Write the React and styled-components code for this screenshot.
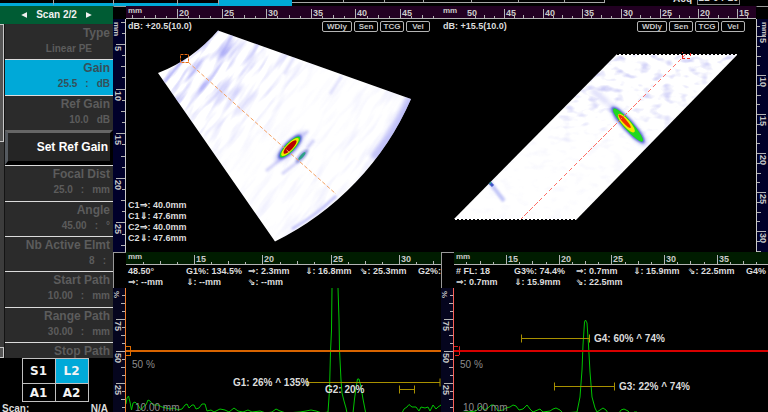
import React from 'react'
import styled, { createGlobalStyle, css } from 'styled-components'

const GlobalStyle = createGlobalStyle`
	* {
		box-sizing: border-box;
	}
	body {
		margin: 0;
		background: #000;
		color: #dcdcdc;
		font-family: 'Liberation Sans', Arial, sans-serif;
		font-weight: bold;
		overflow: hidden;
	}
	button {
		font: inherit;
		color: inherit;
		background: none;
		border: 0;
		padding: 0;
		margin: 0;
	}
`

const Screen = styled.div`
	height: 100vh;
	display: flex;
	flex-direction: column;
`

/* ---------- top menu ---------- */

const TopBar = styled.header`
	flex: 0 0 6px;
	display: flex;
	overflow: hidden;
`

const MenuCell = styled.div`
	flex: 0 0 ${p => p.$w}px;
	height: 6px;
	background: ${p => (p.$active ? '#00a9d8' : '#000')};
	border-right: ${p => (p.$active ? 0 : '1px solid #a8a8a8')};
	border-bottom: ${p => (p.$under ? '3px solid #00a9d8' : 0)};
`

const MenuRest = styled.div`
	display: flex;
	height: 3px;
	overflow: hidden;
	border-bottom: 1px solid #a8a8a8;
`

const MenuStatus = styled.div`
	margin-left: auto;
	display: flex;
	align-items: flex-end;
	height: 5px;
	padding-right: 28px;
	gap: 5px;
	font-size: 10px;
	line-height: 12px;
`

const DateBox = styled.span`
	width: 43px;
	height: 14px;
	border: 1px solid #888;
	text-align: center;
`

const Body = styled.div`
	flex: 1;
	min-height: 0;
	display: flex;
`

/* ---------- side panel ---------- */

const Side = styled.aside`
	flex: 0 0 113px;
	display: flex;
	flex-direction: column;
	overflow: hidden;
`

const ScanHeader = styled.div`
	flex: 0 0 18px;
	display: flex;
	align-items: center;
	justify-content: center;
	gap: 9px;
	background: #005c34;
	color: #f0f0f0;
	font-size: 10px;
	line-height: 18px;
`

const Arrow = styled.button`
	width: 6px;
	height: 6px;
	background: #f0f0f0;
	clip-path: ${p =>
		p.$left ? 'polygon(100% 0, 100% 100%, 0 50%)' : 'polygon(0 0, 100% 50%, 0 100%)'};
`

const ListWrap = styled.div`
	flex: 1;
	min-height: 0;
	display: flex;
`

const Track = styled.div`
	flex: 0 0 5px;
	display: flex;
	flex-direction: column;
	justify-content: space-between;
	background: #3c3c3c;
	border-right: 1px solid #141414;
`

const Thumb = styled.div`
	height: ${p => p.$h}px;
	background: #555;
	border: 1px solid #c8c8c8;
	border-left: 0;
`

const Params = styled.div`
	flex: 1;
	min-width: 0;
	display: grid;
	grid-template-rows: repeat(9, minmax(0, 1fr)) 16px;
`

const ParamRow = styled.button`
	min-height: 0;
	overflow: hidden;
	display: flex;
	flex-direction: column;
	align-items: flex-end;
	padding-right: 3px;
	border-top: 1px solid ${p => (p.$first ? '#2a2a2a' : '#dcdcdc')};
	background: ${p => (p.$active ? '#00a9d8' : '#2b2b2b')};
	color: ${p => (p.$active ? '#35505a' : '#5c5c5c')};
`

const ParamName = styled.span`
	font-size: 12px;
	line-height: 16px;
`

const ParamValue = styled.span`
	display: flex;
	gap: 8px;
	font-size: 10px;
	line-height: 16px;
	padding-right: ${p => p.$pad || 0}px;
`

const ActionRow = styled.button`
	min-height: 0;
	border-top: 3px solid #666;
	border-left: 3px solid #555a60;
	border-right: 3px solid #000;
	border-bottom: 4px solid #000;
	background: #252525;
	color: #fff;
	text-align: right;
	font-size: 12px;
	line-height: 16px;
	padding-right: 2px;
`

const ViewGrid = styled.div`
	flex: none;
	align-self: center;
	margin-right: 3px;
	display: grid;
	grid-template-columns: 32px 32px;
	grid-template-rows: 24px 17px;
	gap: 1px;
	padding: 1px;
	background: #c0c0c0;
`

const ViewButton = styled.button`
	background: ${p => (p.$on ? '#00a9d8' : '#000')};
	color: #f4f4f4;
	font-family: 'DejaVu Sans', sans-serif;
	font-size: 12px;
	line-height: 16px;
`

const ScanStatus = styled.div`
	flex: none;
	height: 10px;
	overflow: hidden;
	display: flex;
	justify-content: space-between;
	padding: 0 5px 0 2px;
	font-size: 10px;
	line-height: 14px;
`

/* ---------- scan views ---------- */

const Main = styled.main`
	flex: 1;
	min-width: 0;
	display: grid;
	grid-template-columns: 328fr 327fr;
	grid-template-rows: 246fr 160fr;
`

const ScanView = styled.section`
	min-width: 0;
	min-height: 0;
	display: grid;
	grid-template-columns: ${p => (p.$flip ? 'minmax(0, 1fr) 12px' : '13px minmax(0, 1fr)')};
	grid-template-rows: 13px minmax(0, 1fr);
`

const WaveView = styled.section`
	min-width: 0;
	min-height: 0;
	display: grid;
	grid-template-columns: 13px minmax(0, 1fr);
	grid-template-rows: 13px 23px minmax(0, 1fr);
`

const Corner = styled.div`
	border-top: 1px solid #999;
	border-left: 1px solid ${p => (p.$tall ? '#999' : '#000')};
	grid-row: ${p => (p.$tall ? 'span 2' : 'auto')};
`

const tones = {
	purple: '#220022',
	navy: '#00002a',
	green: '#001c00',
	slate: '#05051e'
}

const RulerSvg = styled.svg`
	display: block;
	width: 100%;
	height: 100%;
	overflow: hidden;
	background: ${p => tones[p.$tone]};
	shape-rendering: crispEdges;
	text {
		fill: #c8c8c8;
		font-size: 9px;
	}
	text.unit {
		font-size: 8px;
	}
	line {
		stroke: #b4b4b4;
	}
`

const Canvas = styled.div`
	position: relative;
	min-width: 0;
	min-height: 0;
	overflow: hidden;
	display: grid;
	grid-template: minmax(0, 1fr) / minmax(0, 1fr);
	> * {
		grid-area: 1 / 1;
	}
`

const Plot = styled.svg`
	display: block;
	width: 100%;
	height: 100%;
`

const Overlay = styled.div`
	z-index: 1;
	display: flex;
	flex-direction: column;
	justify-content: space-between;
	padding: 2px 11px 8px 2px;
	font-size: 9px;
	line-height: 11px;
`

const OverlayTop = styled.div`
	display: flex;
	justify-content: space-between;
`

const Chips = styled.div`
	display: flex;
	gap: 2px;
`

const Chip = styled.button`
	width: ${p => (p.$wide ? 30 : 24)}px;
	height: 11px;
	border: 1px solid #b4b4b4;
	border-radius: 2px;
	font-size: 8px;
	line-height: 9px;
	color: #c8c8c8;
`

const Cursors = styled.div`
	white-space: pre;
	line-height: 11px;
`

const arrowFont = css`
	font-family: 'Liberation Sans', 'DejaVu Sans', sans-serif;
`

const Readout = styled.div`
	${arrowFont}
	display: grid;
	grid-template-columns: 58px 62px 57px 55px 58px 58px;
	grid-auto-rows: 11px;
	padding: 1px 0 0 2px;
	overflow: hidden;
	white-space: nowrap;
	font-size: 9px;
	line-height: 11px;
`

const range = (from, to) => Array.from({ length: to - from }, (_, i) => from + i)

// start: position of the first labelled tick, step: pixels between labelled ticks
const HRuler = ({ tone, start, step, labels, unitX = 2, firstLine = true }) => (
	<RulerSvg $tone={tone}>
		{range(-4, labels.length * 4 + 1).map(i => {
			const x = Math.round(start + (i * step) / 4)
			const major = i % 4 === 0 && i >= 0 && i / 4 < labels.length
			if (x < 1 || (i <= 0 && !firstLine)) return null
			return (
				<line
					key={i}
					x1={x + 0.5}
					x2={x + 0.5}
					y1={major ? 3 : i % 2 ? 10 : 9}
					y2='12'
				/>
			)
		})}
		<line x1='0' x2='100%' y1='12.5' y2='12.5' />
		<text className='unit' x={unitX} y='7'>mm</text>
		{labels.map((l, i) => (
			<text key={l} x={Math.round(start + i * step) + 2} y='10'>{l}</text>
		))}
	</RulerSvg>
)

const VRuler = ({ tone, start, step, labels, unit = 'mm', flip, line = '#c8c8c8' }) => (
	<RulerSvg $tone={tone}>
		{range(-4, labels.length * 4 + 1).map(i => {
			const y = Math.round(start + (i * step) / 4)
			const major = i % 4 === 0 && i >= 0 && i / 4 < labels.length
			const len = major ? 9 : i % 2 ? 3 : 4
			if (y < 1) return null
			return (
				<line
					key={i}
					x1={flip ? 1 : 12 - len}
					x2={flip ? 1 + len : 12}
					y1={y + 0.5}
					y2={y + 0.5}
				/>
			)
		})}
		<line
			x1={flip ? 0.5 : 12.5}
			x2={flip ? 0.5 : 12.5}
			y1='0'
			y2='100%'
			style={{ stroke: line }}
		/>
		<text className='unit' transform={`translate(${flip ? 6 : 1} 3) rotate(90)`}>{unit}</text>
		{labels.map((l, i) => (
			<text
				key={l}
				transform={`translate(${flip ? 4 : 2} ${Math.round(start + i * step) + 2}) rotate(90)`}
			>
				{l}
			</text>
		))}
	</RulerSvg>
)

const Echo = ({ x, y, angle, rx, ry, hot, core = '#b80000' }) => (
	<g transform={`translate(${x} ${y}) rotate(${angle})`}>
		<ellipse rx={rx + 5} ry={ry} fill='#8888f0' opacity='0.5' filter='url(#soft2)' />
		<ellipse rx={rx + 1} ry={ry} fill='#4858d0' filter='url(#soft1)' />
		<ellipse rx={rx - 1} ry={ry - 1} fill='#20d820' />
		<ellipse cx={hot.dx / 2} rx={hot.rx + 3} ry={ry - 1.8} fill='#f4e800' />
		<ellipse cx={hot.dx} rx={hot.rx} ry={hot.ry} fill={core} />
	</g>
)

const Defs = () => (
	<defs>
		<filter id='soft1' x='-50%' y='-50%' width='200%' height='200%'>
			<feGaussianBlur stdDeviation='0.8' />
		</filter>
		<filter id='soft2' x='-50%' y='-100%' width='200%' height='300%'>
			<feGaussianBlur stdDeviation='2' />
		</filter>
		<filter id='streaks' x='0' y='0' width='100%' height='100%' colorInterpolationFilters='sRGB'>
			<feTurbulence type='fractalNoise' baseFrequency='0.03 0.15' numOctaves='2' seed='7' />
			<feColorMatrix values='0 0 0 0 0.55  0 0 0 0 0.55  0 0 0 0 0.96  2.8 0 0 0 -1.3' />
		</filter>
		<filter id='speckle' x='0' y='0' width='100%' height='100%' colorInterpolationFilters='sRGB'>
			<feTurbulence type='fractalNoise' baseFrequency='0.08 0.14' numOctaves='2' seed='4' />
			<feColorMatrix values='0 0 0 0 0.65  0 0 0 0 0.65  0 0 0 0 0.94  2.4 0 0 0 -1.25' />
		</filter>
	</defs>
)

const SECTOR = 'M158 73A150 150 0 0 0 218 30.5L411 99A286 286 0 0 1 275 241.5Z'

const SectorScan = () => (
	<Plot viewBox='126 19 315 233' preserveAspectRatio='xMinYMin meet'>
		<Defs />
		<defs>
			<clipPath id='sector'><path d={SECTOR} /></clipPath>
			<radialGradient id='nearField' gradientUnits='userSpaceOnUse' cx='102' cy='-70' r='340'>
				<stop offset='0.44' stopColor='#eee' />
				<stop offset='0.52' stopColor='#aaa' />
				<stop offset='0.66' stopColor='#555' />
				<stop offset='0.78' stopColor='#101010' />
				<stop offset='1' stopColor='#222' />
			</radialGradient>
			<mask id='nearMask'>
				<rect x='126' y='19' width='315' height='233' fill='url(#nearField)' />
			</mask>
		</defs>
		<path d={SECTOR} fill='#fff' />
		<g clipPath='url(#sector)'>
			<g mask='url(#nearMask)'>
				<rect x='-200' y='-200' width='500' height='450' transform='translate(250 130) rotate(-54)' filter='url(#streaks)' />
			</g>
			<path d='M413 98Q398 132 375 160' stroke='#7878f0' strokeWidth='14' fill='none' opacity='0.45' filter='url(#soft2)' />
			<path d='M336 196Q315 216 292 229' stroke='#9090f4' strokeWidth='3' fill='none' opacity='0.5' filter='url(#soft1)' />
			<path d='M231 38L222 56M296 54L284 74M342 76L330 94' stroke='#8888f0' strokeWidth='3' opacity='0.25' filter='url(#soft1)' />
			<path d='M282 158L266 171M299 161L282 174M303 135L308 131M307 148L314 140' stroke='#8888ee' strokeWidth='3' opacity='0.35' filter='url(#soft1)' />
		</g>
		<Echo x={290} y={147} angle={-46} rx={15} ry={5.5} hot={{ dx: 0, rx: 9, ry: 2.8 }} />
		<g transform='translate(302 156) rotate(-48)'>
			<ellipse rx='9' ry='3' fill='#6870d0' opacity='0.7' filter='url(#soft1)' />
			<ellipse rx='5' ry='1.5' fill='#30a088' />
		</g>
		<path d='M188 62L336 194' stroke='#f4a060' strokeDasharray='4 2' fill='none' />
		<rect x='180.5' y='54.5' width='8' height='8' fill='none' stroke='#e86a10' strokeDasharray='3 1' />
	</Plot>
)

const LinearScan = () => (
	<Plot viewBox='441 19 315 233' preserveAspectRatio='xMinYMin meet'>
		<defs>
			<clipPath id='linear'><path d='M617 54H738L576 220H453Z' /></clipPath>
			<linearGradient id='fade' x1='0' y1='0' x2='0' y2='1'>
				<stop offset='0' stopColor='#ccc' />
				<stop offset='0.35' stopColor='#999' />
				<stop offset='0.55' stopColor='#222' />
				<stop offset='1' stopColor='#111' />
			</linearGradient>
			<mask id='linearMask'>
				<rect x='441' y='54' width='315' height='166' fill='url(#fade)' />
			</mask>
		</defs>
		<path d='M617 54H738L576 220H453Z' fill='#fff' />
		<g clipPath='url(#linear)'>
			<g mask='url(#linearMask)'>
				<rect x='441' y='50' width='315' height='172' filter='url(#speckle)' />
			</g>
			<path d='M608 103L592 90' stroke='#8888ee' strokeWidth='5' opacity='0.3' filter='url(#soft2)' />
			<Echo x={628} y={125} angle={48} rx={23} ry={5.5} core='#f03000' hot={{ dx: -5, rx: 9, ry: 2 }} />
			<path d='M488 180L504 201' stroke='#8890f0' strokeWidth='4' opacity='0.5' filter='url(#soft1)' />
			<path d='M488 181L493 186' stroke='#4058c8' strokeWidth='3' />
			<path d='M488 182L491 183' stroke='#30b080' strokeWidth='2' />
		</g>
		<path d='M617 54.5H738M453 219.5H576' stroke='#000' strokeDasharray='2 2' />
		<path d='M686 54L521 219' stroke='#ff7068' strokeDasharray='5 2' fill='none' shapeRendering='crispEdges' />
		<path d='M682 58V52M682 58H690V52' stroke='#f02818' strokeDasharray='3 2' fill='none' shapeRendering='crispEdges' />
	</Plot>
)

const GateText = styled.text`
	font-size: 10px;
	fill: #dcdcdc;
`

const FaintText = styled.text`
	font-size: 10px;
	font-weight: normal;
	fill: #8c8c8c;
`

const Gate = ({ x1, x2, y }) => (
	<path
		d={`M${x1} ${y}H${x2}M${x1} ${y - 4}V${y + 4}M${x2} ${y - 4}V${y + 4}`}
		stroke='#a89000'
		fill='none'
	/>
)

const Wave = styled.path`
	fill: none;
	stroke: #00c400;
	stroke-width: 1;
`

const LeftWave = () => (
	<Plot viewBox='126 288 315 124' preserveAspectRatio='xMinYMin meet'>
		<Wave d='M126 404L127 398L128.500 396L130 402L131.500 410L133 403L135 402L138 405L141 410L144 406L146 405L148 400L150 401L153 405L158 405L162 407L166 408L170 409L174 408L178 410L182 409L185 405L187 404L189 408L192 405L194 405L196 409L199 408L202 404L205 404L207 411L211 410L214 412L220 409L225 410L229 412L234 408L238 411L243 412L248 410L252 412L260 411L266 413L272 412L276 409L280 411L286 413L300 412L306 411L311 410L316 411L322 413L328 412L329.500 390L330.500 352L331.500 330L332 288M338 288L339 320L339.500 350L341 380L342 393L344 401L346 408L347 413M353 413L354.500 399L356 388L357.500 379L359 379L361 387L363 399L365.500 412M402 413L404 409L407 407L409 404.500L412 407L416 407L419 411L421 407L425 408L428 407L430 411L433 405L436 409L438 407L441 405' />
		<path d='M126 351H441' stroke='#d86400' strokeWidth='2' />
		<rect x='125.500' y='346.500' width='5' height='9' fill='none' stroke='#e06c00' />
		<Gate x1={307.5} x2={440} y={382.5} />
		<Gate x1={399.5} x2={414.5} y={389.5} />
		<FaintText x='132' y='368'>50 %</FaintText>
		<FaintText x='135' y='411'>10.00 mm</FaintText>
		<GateText x='233' y='386'>G1: 26% ^ 135%</GateText>
		<GateText x='325' y='393'>G2: 20%</GateText>
	</Plot>
)

const RightWave = () => (
	<Plot viewBox='454 288 314 124' preserveAspectRatio='xMinYMin meet'>
		<Wave d='M454 413L468 412L476 411L481 406L484 410L488 408L491 405L494 405L498 411L503 410L506 408L510 407L513 405L516 406L519 410L523 409L527 405L530 409L533 412L540 409L543 412L550 411L553 409L556 408L560 410L563 413L577 412L580 397L582 370L583 345L584.500 322L585.500 320L587 323L588.500 345L590 372L592 397L595 408L597 412L600 410L603 408L606 410L608 413M619 413L621 410L624 409L628 411L630 413M634 412H637' />
		<path d='M454 351H768' stroke='#d80000' strokeWidth='2' />
		<path d='M454 346.500H459.500V355.500H454' fill='none' stroke='#e02020' strokeDasharray='4 1' />
		<Gate x1={521.5} x2={589.5} y={338.5} />
		<Gate x1={554.5} x2={614.5} y={386.5} />
		<FaintText x='460' y='368'>50 %</FaintText>
		<FaintText x='463' y='411'>10.00 mm</FaintText>
		<GateText x='594' y='342'>G4: 60% ^ 74%</GateText>
		<GateText x='619' y='390'>G3: 22% ^ 74%</GateText>
	</Plot>
)

const ScanOverlay = ({ gain, children }) => (
	<Overlay>
		<OverlayTop>
			<span>dB: {gain}</span>
			<Chips>
				<Chip $wide>WDly</Chip>
				<Chip>Sen</Chip>
				<Chip>TCG</Chip>
				<Chip>Vel</Chip>
			</Chips>
		</OverlayTop>
		{children}
	</Overlay>
)

const params = [
	{ name: 'Type', value: 'Linear PE', pad: 18 },
	{ name: 'Gain', value: '25.5', colon: true, unit: 'dB', active: true },
	{ name: 'Ref Gain', value: '10.0', unit: 'dB' },
	{ action: 'Set Ref Gain' },
	{ name: 'Focal Dist', value: '25.0', colon: true, unit: 'mm' },
	{ name: 'Angle', value: '45.00', colon: true, unit: '°' },
	{ name: 'Nb Active Elmt', value: '8', colon: true, pad: 4 },
	{ name: 'Start Path', value: '10.00', colon: true, unit: 'mm' },
	{ name: 'Range Path', value: '30.00', colon: true, unit: 'mm' },
	{ name: 'Stop Path' }
]

const leftReadings = ['48.50°', 'G1%: 134.5%', '⇒: 2.3mm', '⇓: 16.8mm', '⇘: 25.3mm', 'G2%:', '⇒: --mm', '⇓: --mm', '⇘: --mm']
const rightReadings = ['# FL: 18', 'G3%: 74.4%', '⇒: 0.7mm', '⇓: 15.9mm', '⇘: 22.5mm', 'G4%', '⇒: 0.7mm', '⇓: 15.9mm', '⇘: 22.5mm']

export default () => (
	<Screen>
		<GlobalStyle />
		<TopBar>
			{[54, 60, 64, 41].map(w => <MenuCell key={w} $w={w} $under />)}
			<MenuCell $w={73} $active />
			<MenuRest>
				{[52, 41, 39, 48, 47, 46, 40].map(w => <MenuCell key={w} $w={w} />)}
			</MenuRest>
			<MenuStatus>
				<span>Acq</span>
				<DateBox>21-04-10</DateBox>
			</MenuStatus>
		</TopBar>
		<Body>
			<Side>
				<ScanHeader>
					<Arrow $left aria-label='Previous scan' />
					Scan 2/2
					<Arrow aria-label='Next scan' />
				</ScanHeader>
				<ListWrap>
					<Track>
						<Thumb $h={118} />
						<Thumb $h={11} />
					</Track>
					<Params>
						{params.map((p, i) =>
							p.action ? (
								<ActionRow key={p.action}>{p.action}</ActionRow>
							) : (
								<ParamRow key={p.name} $active={p.active} $first={i === 0}>
									<ParamName>{p.name}</ParamName>
									{p.value && (
										<ParamValue $pad={p.pad}>
											<span>{p.value}</span>
											{p.colon && <span>:</span>}
											{p.unit && <span>{p.unit}</span>}
										</ParamValue>
									)}
								</ParamRow>
							)
						)}
					</Params>
				</ListWrap>
				<ViewGrid>
					<ViewButton>S1</ViewButton>
					<ViewButton $on>L2</ViewButton>
					<ViewButton>A1</ViewButton>
					<ViewButton>A2</ViewButton>
				</ViewGrid>
				<ScanStatus>
					<span>Scan:</span>
					<span>N/A</span>
				</ScanStatus>
			</Side>
			<Main>
				<ScanView>
					<Corner />
					<HRuler tone='purple' start={51} step={44.6} labels={['20', '25', '30', '35', '40', '45']} />
					<VRuler tone='navy' start={25} step={44.6} labels={['5', '10', '15', '20', '25']} />
					<Canvas>
						<SectorScan />
						<ScanOverlay gain='+20.5(10.0)'>
							<Cursors>{'C1⇒: 40.0mm\nC1⇓: 47.6mm\nC2⇒: 40.0mm\nC2⇓: 47.6mm'}</Cursors>
						</ScanOverlay>
					</Canvas>
				</ScanView>
				<ScanView $flip>
					<HRuler
						tone='purple'
						start={24}
						step={38.9}
						firstLine={false}
						labels={['50', '45', '40', '35', '30', '25', '20', '15']}
					/>
					<Corner />
					<Canvas>
						<LinearScan />
						<ScanOverlay gain='+15.5(10.0)' />
					</Canvas>
					<VRuler flip tone='navy' start={17} step={39} labels={['5', '10', '15', '20', '25', '30']} />
				</ScanView>
				<WaveView>
					<Corner $tall />
					<HRuler tone='green' start={68} step={68.4} labels={['15', '20', '25', '30']} />
					<Readout>{leftReadings.map((r, i) => <span key={i}>{r}</span>)}</Readout>
					<VRuler tone='slate' unit='%' line='#f08030' start={31} step={32} labels={['75', '50', '25']} />
					<Canvas><LeftWave /></Canvas>
				</WaveView>
				<WaveView>
					<Corner $tall />
					<HRuler tone='green' start={52} step={52.7} labels={['15', '20', '25', '30', '35']} />
					<Readout>{rightReadings.map((r, i) => <span key={i}>{r}</span>)}</Readout>
					<VRuler tone='slate' unit='%' line='#f86058' start={31} step={32} labels={['75', '50', '25']} />
					<Canvas><RightWave /></Canvas>
				</WaveView>
			</Main>
		</Body>
	</Screen>
)
